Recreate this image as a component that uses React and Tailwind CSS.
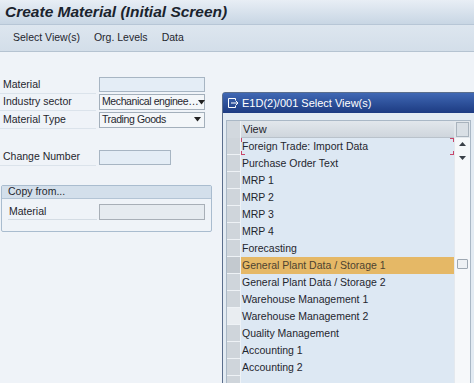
import React from 'react'

const views = [
  'Foreign Trade: Import Data',
  'Purchase Order Text',
  'MRP 1',
  'MRP 2',
  'MRP 3',
  'MRP 4',
  'Forecasting',
  'General Plant Data / Storage 1',
  'General Plant Data / Storage 2',
  'Warehouse Management 1',
  'Warehouse Management 2',
  'Quality Management',
  'Accounting 1',
  'Accounting 2',
  '',
]

const Arrow = () => (
  <svg width="7" height="5" viewBox="0 0 7 5" className="shrink-0">
    <path d="M0 0h7L3.5 4.5z" fill="#222" />
  </svg>
)

const Field = ({ label, children, w = 'w-[96px]' }) => (
  <div className="flex items-center h-[17.5px]">
    <div className={`${w} h-full flex items-end pb-[3px] pl-[3px] leading-[12px] border-b border-[#dbe3eb]`}>{label}</div>
    <div className="ml-[3px]">{children}</div>
  </div>
)

const Input = ({ w = 'w-[106px]' }) => (
  <div className={`${w} h-[15px] bg-[#e4edf6] border border-[#a7b5c3]`} />
)

const Select = ({ value }) => (
  <div className="w-[106px] h-[16px] bg-[#f3f6f9] border border-[#a3afbb] flex items-center pl-[2px] pr-[3px]">
    <span className="flex-1 whitespace-nowrap tracking-[-0.4px]">{value}</span>
    <Arrow />
  </div>
)

const Corner = ({ className }) => (
  <div className={`absolute w-[4px] h-[4px] border-[#c8466a] ${className}`} />
)

export default function App() {
  return (
    <div className="relative w-[474px] h-[383px] overflow-hidden bg-[#eff3f8] font-['Liberation_Sans',Arial,sans-serif] text-[10.5px] text-[#1f262e]">
      {/* title */}
      <div className="h-[25px] flex items-center pl-[5px] bg-gradient-to-b from-[#e8eef5] to-[#c8d6e4] border-b border-[#b7c6d6]">
        <span className="font-bold italic text-[15.5px] text-[#1a232d]">Create Material (Initial Screen)</span>
      </div>

      {/* toolbar */}
      <div className="h-[27px] flex items-center gap-[14px] pl-[13px] bg-gradient-to-b from-[#dde6ef] to-[#d3dee9] border-b border-[#b5c3d1]">
        <span>Select View(s)</span>
        <span>Org. Levels</span>
        <span>Data</span>
      </div>

      {/* form */}
      <div className="pt-[24px] w-[212px]">
        <Field label="Material"><Input /></Field>
        <Field label="Industry sector"><Select value="Mechanical enginee…" /></Field>
        <Field label="Material Type"><Select value="Trading Goods" /></Field>
        <div className="mt-[20px]">
          <Field label="Change Number"><Input w="w-[72px]" /></Field>
        </div>

        <div className="mt-[19px] ml-[1px] w-[211px] h-[47px] border border-[#a9bccf] rounded-[2px]">
          <div className="h-[13px] flex items-center pl-[6px] bg-[#d3dfeb] border-b border-[#b3c4d5]">Copy from...</div>
          <div className="flex items-center h-[17px] mt-[4px] pl-[6px]">
            <div className="w-[89px] h-full flex items-end pb-[2px] pl-[1px] leading-[12px] border-b border-[#d4dce4]">Material</div>
            <div className="ml-[2px] w-[106px] h-[16px] bg-[#e6ebf0] border border-[#a8afb7]" />
          </div>
        </div>
      </div>

      {/* dialog */}
      <div className="absolute left-[222px] top-[92px] w-[260px] h-[300px] border border-[#5b6e8c] rounded-tl-[3px] bg-[#e3ebf3]">
        <div className="h-[20px] flex items-center pl-[5px] gap-[3px] bg-gradient-to-b from-[#4068b4] to-[#1d3b82] text-white text-[11px]">
          <svg width="11" height="10" viewBox="0 0 11 10" className="shrink-0">
            <path d="M7.5 0.5H0.5v9h7M7.5 0.5v2M7.5 9.5v-2" fill="none" stroke="#fff" strokeWidth="1" />
            <path d="M3 5h7M8 3l2 2-2 2" fill="none" stroke="#fff" strokeWidth="1" />
          </svg>
          <span>E1D(2)/001 Select View(s)</span>
        </div>

        <div className="pl-[3px] pt-[7px]">
          <div className="w-[245px] border border-[#aab8c6] bg-[#f5f7fa]">
            {/* header */}
            <div className="flex h-[17px]">
              <div className="w-[14px] bg-[#d2d8de] border-r border-[#eef1f4]" />
              <div className="w-[213px] flex items-center pl-[2px] bg-gradient-to-b from-[#e2e7ec] to-[#cfd6dd] border-b border-[#b9c2cb] text-[11px]">View</div>
              <div className="w-[16px] flex items-center justify-center bg-[#e2e7ec]">
                <div className="w-[13px] h-[15px] bg-[#d9dfe5] border border-[#a9b3bd]" />
              </div>
            </div>

            <div className="flex">
              <div className="w-[227px]">
                {views.map((v, i) => {
                  const sel = i === 7
                  return (
                    <div key={i} className="flex h-[17px]">
                      <div className={`w-[14px] border-b border-r border-[#eef2f6] ${sel ? 'bg-[#c3c9cf]' : i === 10 ? 'bg-[#e9edf1]' : 'bg-[#cfd5db]'}`} />
                      <div className={`relative flex-1 flex items-center pl-[1px] whitespace-nowrap ${sel ? 'bg-[#e5b866] text-[#4d4330]' : 'bg-[#dde8f3]'}`}>
                        {v}
                        {i === 0 && (
                          <>
                            <Corner className="left-0 top-0 border-l" />
                            <Corner className="left-0 bottom-0 border-l border-b" />
                            <Corner className="right-0 top-0 border-t border-r" />
                            <Corner className="right-0 bottom-0 border-r border-b" />
                          </>
                        )}
                      </div>
                    </div>
                  )
                })}
              </div>

              {/* scrollbar */}
              <div className="w-[16px] bg-[#f6f8fa] border-l border-[#e4e9ee] flex flex-col items-center">
                <svg width="7" height="4" viewBox="0 0 7 4" className="mt-[4px]">
                  <path d="M0 4h7L3.5 0z" fill="#3a4048" />
                </svg>
                <svg width="7" height="4" viewBox="0 0 7 4" className="mt-[10px]">
                  <path d="M0 0h7L3.5 4z" fill="#3a4048" />
                </svg>
                <div className="mt-[99px] w-[11px] h-[10px] bg-[#eef1f4] border border-[#9ea8b2] rounded-[1px]" />
              </div>
            </div>
          </div>
        </div>
      </div>
    </div>
  )
}
